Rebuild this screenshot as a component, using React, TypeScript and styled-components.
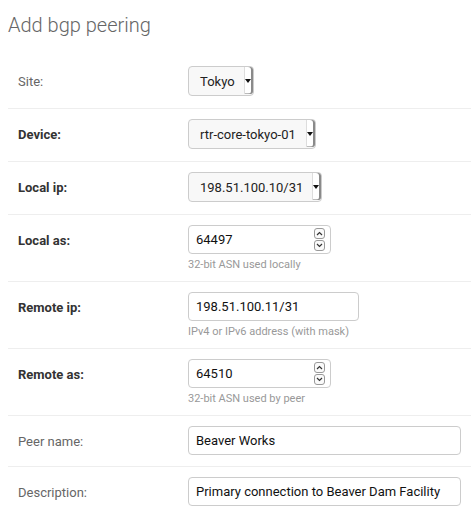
import styled, { createGlobalStyle } from 'styled-components';

const GlobalStyle = createGlobalStyle`
  html, body {
    margin: 0;
    padding: 0;
    background: #fff;
  }
  body {
    font-family: Roboto, 'Liberation Sans', sans-serif;
    color: #333;
  }
`;

const Page = styled.div`
  width: 463px;
  padding-left: 8px;
  overflow: hidden;
`;

const Title = styled.h1`
  margin: 13px 0 19px;
  font-size: 20px;
  line-height: 24px;
  font-weight: 300;
  color: #666;
`;

const Row = styled.div<{ $last?: boolean }>`
  display: flex;
  align-items: flex-start;
  padding: 10px;
  border-bottom: ${(props) => (props.$last ? 'none' : '1px solid #eee')};
`;

const Label = styled.label<{ $required?: boolean }>`
  flex: 0 0 170px;
  display: flex;
  align-items: center;
  height: 30px;
  font-size: 13px;
  font-weight: ${(props) => (props.$required ? 700 : 400)};
  color: ${(props) => (props.$required ? '#333' : '#666')};
`;

const Field = styled.div`
  flex: 1;
  display: flex;
  flex-direction: column;
  align-items: flex-start;
  min-width: 0;
`;

const SelectBox = styled.div<{ $width: number }>`
  width: ${(props) => props.$width}px;
  height: 30px;
  margin-bottom: 2px;
  box-sizing: border-box;
  display: flex;
  align-items: stretch;
  background: #f8f8f8;
  border: 1px solid #ccc;
  border-radius: 4px;
  font-size: 13px;
  color: #222;
`;

const SelectText = styled.span`
  flex: 1;
  display: flex;
  align-items: center;
  padding-left: 11px;
  white-space: nowrap;
`;

const SelectArrow = styled.span`
  width: 8px;
  margin: 0 0 1px;
  display: flex;
  align-items: center;
  justify-content: center;
  background: #fff;
  border-left: 1px solid #ddd;
  box-shadow: inset -2px 0 0 #8a8a8a, inset 0 -1px 0 #bbb;
  border-radius: 0 3px 3px 0;

  &::before {
    content: '';
    margin-right: 2px;
    border-left: 3px solid transparent;
    border-right: 3px solid transparent;
    border-top: 4px solid #111;
  }
`;

const TextBox = styled.div<{ $width?: number }>`
  width: ${(props) => (props.$width ? `${props.$width}px` : '100%')};
  height: 29px;
  box-sizing: border-box;
  display: flex;
  align-items: center;
  padding: 0 5px 0 7px;
  border: 1px solid #ccc;
  border-radius: 4px;
  background: #fff;
  font-size: 13px;
  color: #111;
  white-space: nowrap;
`;

const Value = styled.span`
  flex: 1;
`;

const Spinner = styled.span`
  display: flex;
  flex-direction: column;
  gap: 1px;
`;

const SpinButton = styled.span`
  width: 11px;
  height: 11px;
  box-sizing: border-box;
  display: flex;
  align-items: center;
  justify-content: center;
  border: 1px solid #999;
  border-radius: 3px;
  background: #fafafa;
`;

const Help = styled.div`
  margin-top: 4px;
  font-size: 11px;
  line-height: 13px;
  color: #999;
`;

const Chevron = ({ up }: { up?: boolean }) => (
  <svg width="7" height="5" viewBox="0 0 7 5">
    <path
      d={up ? 'M1 4 L3.5 1.5 L6 4' : 'M1 1 L3.5 3.5 L6 1'}
      fill="none"
      stroke="#333"
      strokeWidth="1.2"
    />
  </svg>
);

const Select = ({ value, width }: { value: string; width: number }) => (
  <SelectBox $width={width}>
    <SelectText>{value}</SelectText>
    <SelectArrow />
  </SelectBox>
);

const NumberInput = ({ value }: { value: string }) => (
  <TextBox $width={143}>
    <Value>{value}</Value>
    <Spinner>
      <SpinButton>
        <Chevron up />
      </SpinButton>
      <SpinButton>
        <Chevron />
      </SpinButton>
    </Spinner>
  </TextBox>
);

const App = () => {
  return (
    <Page>
      <GlobalStyle />
      <Title>Add bgp peering</Title>

      <Row>
        <Label>Site:</Label>
        <Field>
          <Select value="Tokyo" width={66} />
        </Field>
      </Row>

      <Row>
        <Label $required>Device:</Label>
        <Field>
          <Select value="rtr-core-tokyo-01" width={128} />
        </Field>
      </Row>

      <Row>
        <Label $required>Local ip:</Label>
        <Field>
          <Select value="198.51.100.10/31" width={134} />
        </Field>
      </Row>

      <Row>
        <Label $required>Local as:</Label>
        <Field>
          <NumberInput value="64497" />
          <Help>32-bit ASN used locally</Help>
        </Field>
      </Row>

      <Row>
        <Label $required>Remote ip:</Label>
        <Field>
          <TextBox $width={171}>
            <Value>198.51.100.11/31</Value>
          </TextBox>
          <Help>IPv4 or IPv6 address (with mask)</Help>
        </Field>
      </Row>

      <Row>
        <Label $required>Remote as:</Label>
        <Field>
          <NumberInput value="64510" />
          <Help>32-bit ASN used by peer</Help>
        </Field>
      </Row>

      <Row>
        <Label>Peer name:</Label>
        <Field>
          <TextBox>
            <Value>Beaver Works</Value>
          </TextBox>
        </Field>
      </Row>

      <Row $last>
        <Label>Description:</Label>
        <Field>
          <TextBox>
            <Value>Primary connection to Beaver Dam Facility</Value>
          </TextBox>
        </Field>
      </Row>
    </Page>
  );
};

export default App;
